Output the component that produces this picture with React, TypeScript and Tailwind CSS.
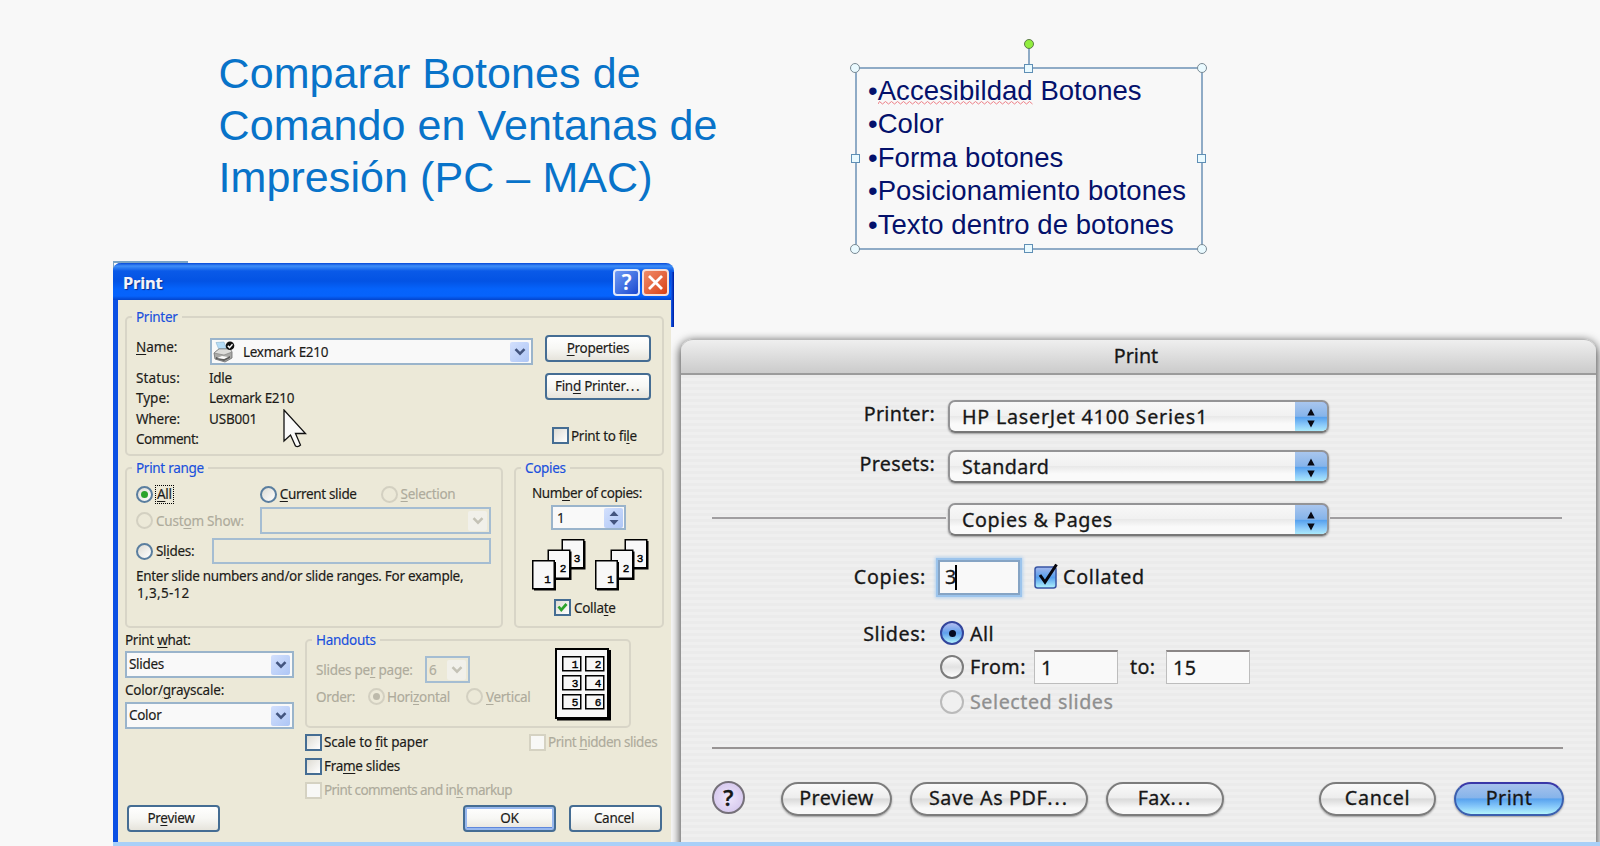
import React from "react";

type Kids = { children?: React.ReactNode };

const U = ({ children }: Kids) => (
  <span className="underline decoration-1 underline-offset-2">{children}</span>
);

/* ---------- slide text box ---------- */

const Handle = ({ at, round }: { at: string; round?: boolean }) => (
  <span
    className={`absolute border bg-[#eafaff] ${
      round ? "size-[10px] rounded-full border-[#7a8a94]" : "size-[9px] border-[#5f8fb5]"
    } ${at}`}
  />
);

const bullets = ["Color", "Forma botones", "Posicionamiento botones", "Texto dentro de botones"];

const TextBox = () => (
  <div className="absolute left-[855px] top-[67px] h-[183px] w-[348px] border-2 border-[#8fabc6] pl-[11px] pt-[5px] text-[27.5px] leading-[33.4px] tracking-[0.05px] text-[#04116b]">
    <div className="flex whitespace-nowrap">
      <span>•</span>
      <span className="relative">
        Accesibildad
        <svg className="absolute left-0 top-[27px]" width="156" height="4" viewBox="0 0 156 4">
          <path
            d={"M0 3" + Array.from({ length: 52 }, (_, i) => ` L${i * 3 + 1.5} ${i % 2 ? 3 : 0.5}`).join("")}
            fill="none"
            stroke="#ee7f86"
            strokeWidth="1"
          />
        </svg>
      </span>
      <span>&nbsp;Botones</span>
    </div>
    {bullets.map((b) => (
      <div key={b} className="whitespace-nowrap">•{b}</div>
    ))}
    <span className="absolute -top-[22px] left-[171px] h-[20px] w-[2px] bg-[#8fabc6]" />
    <span className="absolute -top-[30px] left-[167px] size-[10px] rounded-full border border-[#5d7c4a] bg-[#92ee3f]" />
    <Handle at="-left-[7px] -top-[6px]" round />
    <Handle at="-right-[6px] -top-[6px]" round />
    <Handle at="-left-[7px] -bottom-[6px]" round />
    <Handle at="-right-[6px] -bottom-[6px]" round />
    <Handle at="left-[167px] -top-[5px]" />
    <Handle at="left-[167px] -bottom-[5px]" />
    <Handle at="-left-[6px] top-[85px]" />
    <Handle at="-right-[5px] top-[85px]" />
  </div>
);

/* ---------- Windows XP dialog ---------- */

const Group = ({ title, className, children }: Kids & { title: string; className: string }) => (
  <fieldset className={`rounded-[5px] border-2 border-[#d8d5c7] ${className}`}>
    <legend className="ml-[5px] h-4 px-[4px] leading-4 text-[#1a50dd]">{title}</legend>
    {children}
  </fieldset>
);

const Chevron = ({ off }: { off?: boolean }) => (
  <span
    className={`flex h-5 w-[19px] shrink-0 items-center justify-center rounded-[2px] ${
      off ? "bg-[#f1f0ea]" : "bg-gradient-to-br from-[#d3e0fd] to-[#aec6f5]"
    }`}
  >
    <svg width="12" height="8" viewBox="0 0 12 8">
      <path d="M1.5 1.2 6 5.7l4.500-4.500" fill="none" stroke={off ? "#c4c2b6" : "#43557f"} strokeWidth="2.600" />
    </svg>
  </span>
);

const Combo = ({ className, off, children }: Kids & { className: string; off?: boolean }) => (
  <div
    className={`flex items-center justify-between border-2 pr-[2px] ${
      off ? "border-[#a5bdd2] bg-[#ece9d8] text-[#b0ad9e]" : "border-[#9ab4cb] bg-[#f9f9f9]"
    } ${className}`}
  >
    <span className="flex items-center">{children}</span>
    <Chevron off={off} />
  </div>
);

const XpButton = ({ className, primary, children }: Kids & { className: string; primary?: boolean }) => (
  <button
    className={`flex h-[27px] items-center justify-center rounded-[4px] border-2 border-[#456d93] bg-gradient-to-b from-white via-[#f7f7f4] to-[#e6e4dc] pb-px ${
      primary ? "shadow-[inset_0_0_0_2px_#98b8ee,inset_0_-3px_0_0_#5f87dc]" : ""
    } ${className}`}
  >
    {children}
  </button>
);

const XpCheck = ({ on, off }: { on?: boolean; off?: boolean }) => (
  <span
    className={`flex size-[17px] shrink-0 items-center justify-center border-2 ${
      off ? "border-[#d5d2c2] bg-[#f8f8f6]" : "border-[#456d93] bg-gradient-to-br from-[#dedcd4] to-white"
    }`}
  >
    {on && (
      <svg width="11" height="11" viewBox="0 0 11 11">
        <path d="M1.500 4.500 4.300 8 9.500 2" fill="none" stroke="#2ba32b" strokeWidth="2.700" />
      </svg>
    )}
  </span>
);

const XpRadio = ({ on, off }: { on?: boolean; off?: boolean }) => (
  <span
    className={`flex size-[17px] shrink-0 items-center justify-center rounded-full border-2 ${
      off ? "border-[#d3d0c1] bg-[#ece9d8]" : "border-[#5a7e9f] bg-gradient-to-br from-[#dedcd4] to-white"
    }`}
  >
    {on && <span className={`size-[7px] rounded-full ${off ? "bg-[#bdbaab]" : "bg-[#2ba32b]"}`} />}
  </span>
);

const PrinterIcon = () => (
  <svg width="22" height="22" viewBox="0 0 22 22">
    <path d="M3 1.500l8-.5 3 8-7 2z" fill="#b5dcf6" stroke="#8bb2cd" strokeWidth=".6" />
    <path d="M1 12 6 8l11 0 2 3v6l-7 4-10-3z" fill="#a9a9a7" stroke="#6d6d6d" strokeWidth=".8" />
    <path d="M1 12l10 2 8-3-2-3H6z" fill="#dcdcda" stroke="#7a7a7a" strokeWidth=".6" />
    <path d="M3 16l8 2 6-3v2l-6 3-8-2z" fill="#5c5c5c" />
    <path d="M4 17l7 1 4-2-6-1z" fill="#fafafa" />
    <circle cx="17" cy="4.800" r="4.300" fill="#111" />
    <path d="M14.800 4.800l1.700 1.800 3-3.400" fill="none" stroke="#fff" strokeWidth="1.400" />
  </svg>
);

const Page = ({ x, y, n }: { x: number; y: number; n: number }) => (
  <g transform={`translate(${x} ${y})`}>
    <rect x="2" y="2" width="22" height="28.500" fill="#000" />
    <rect x=".75" y=".75" width="21.500" height="28" fill="#f8f8f8" stroke="#000" strokeWidth="1.500" />
    <text x="15.500" y="22.500" textAnchor="middle" fontFamily="Liberation Mono" stroke="#000" strokeWidth=".4" fontSize="11">
      {n}
    </text>
  </g>
);

const CollatePages = () => (
  <svg className="block" width="118" height="52" viewBox="0 0 118 52">
    {[0, 63].map((x) => (
      <React.Fragment key={x}>
        <Page x={x + 29.5} y={0} n={3} />
        <Page x={x + 15.5} y={10.5} n={2} />
        <Page x={x} y={21} n={1} />
      </React.Fragment>
    ))}
  </svg>
);

const HandoutSheet = () => (
  <svg className="block" width="57" height="73" viewBox="0 0 57 73">
    <rect x="2" y="2" width="54" height="70.500" fill="#000" />
    <rect x="1" y="1" width="52" height="69" fill="#f8f8f8" stroke="#000" strokeWidth="2" />
    {[1, 2, 3, 4, 5, 6].map((n, i) => (
      <g key={n} transform={`translate(${7 + (i % 2) * 23} ${8 + Math.floor(i / 2) * 19})`}>
        <rect x=".75" y=".75" width="18" height="14" fill="#f8f8f8" stroke="#000" strokeWidth="1.500" />
        <text x="13" y="11.500" textAnchor="middle" fontFamily="Liberation Mono" stroke="#000" strokeWidth=".4" fontSize="11">
          {n}
        </text>
      </g>
    ))}
  </svg>
);

const XpDialog = () => (
  <div className="absolute left-[113px] top-[263px] flex h-[579px] w-[561px] flex-col whitespace-nowrap rounded-t-[8px] border-l-[5px] border-[#0b50e4] bg-[#ece9d8] font-['Noto_Sans',sans-serif] text-[13.5px] leading-[16px] tracking-[-0.3px] text-[#1c1b18] [-webkit-text-stroke:0.15px]">
    <div className="-ml-[5px] flex h-[37px] shrink-0 items-center rounded-t-[8px] bg-[linear-gradient(#0648d8_0,#3f8ff8_3px,#0a5ae8_8px,#0353e4_18px,#0563fb_26px,#0663fc_33px,#0344cc_37px)] pl-[10px] pr-[5px]">
      <span className="mt-[3px] grow text-[16.5px] font-bold tracking-[-0.2px] text-[#f4f4fa] [text-shadow:1px_1px_1px_#0a2a8a]">Print</span>
      <span className="mt-[2px] flex size-[27px] items-center justify-center rounded-[4px] border-2 border-[#dfe8fb] bg-gradient-to-br from-[#6f9af5] to-[#1c46cf] text-[21px] font-semibold leading-none text-white">
        ?
      </span>
      <span className="ml-[2px] mt-[2px] flex size-[27px] items-center justify-center rounded-[4px] border-2 border-[#f6dfd8] bg-gradient-to-br from-[#f08a66] to-[#d8400f]">
        <svg width="17" height="17" viewBox="0 0 17 17">
          <path d="M2 2l13 13M15 2 2 15" stroke="#fff" strokeWidth="2.800" />
        </svg>
      </span>
    </div>

    <Group title="Printer" className="ml-[7px] mt-[9px] flex h-[147px] w-[539px] justify-between">
      <div className="flex h-full">
        <div className="ml-[9px] mt-[13px] w-[399px]">
          <div className="flex h-[27px]">
            <span className="w-[74px] pt-px tracking-[-0.1px]"><U>N</U>ame:</span>
            <Combo className="w-[323px]">
              <span className="ml-px"><PrinterIcon /></span>
              <span className="ml-[8px]">Lexmark E210</span>
            </Combo>
          </div>
          <div className="mt-[3px] grid grid-cols-[73px_1fr] leading-[20.3px]">
            <span className="tracking-[0.1px]">Status:</span><span>Idle</span>
            <span className="tracking-[0px]">Type:</span><span>Lexmark E210</span>
            <span className="tracking-[-0.2px]">Where:</span><span className="tracking-[-0.2px]">USB001</span>
            <span className="tracking-[-0.5px]">Comment:</span>
          </div>
        </div>
        <div className="ml-[10px] mt-[10px] flex w-[106px] flex-col">
          <XpButton className="w-full"><span><U>P</U>roperties</span></XpButton>
          <XpButton className="mt-[11px] w-full"><span>Fin<U>d</U> Printer<span className="tracking-[1.5px]">...</span></span></XpButton>
          <div className="mt-[27px] flex items-center gap-[2px] pl-[7px]">
            <XpCheck /><span>Print to fi<U>l</U>e</span>
          </div>
        </div>
      </div>
    </Group>

    <div className="ml-[7px] mt-[4px] flex gap-[11px]">
      <Group title="Print range" className="h-[168px] w-[378px]">
        <div className="ml-[9px] mt-[8px] flex h-[20px] items-center">
          <XpRadio on />
          <span className="ml-[2px] border border-dotted border-black px-px leading-[17px]"><U>A</U>ll</span>
          <span className="ml-[86px] flex items-center gap-[3px]"><XpRadio /><span className="tracking-[-0.35px]"><U>C</U>urrent slide</span></span>
          <span className="ml-[24px] flex items-center gap-[3px] text-[#aeab9c]"><XpRadio off /><span><U>S</U>election</span></span>
        </div>
        <div className="ml-[9px] mt-[3px] flex h-[27px] items-center gap-[3px] text-[#aeab9c]">
          <XpRadio off />
          <span className="w-[101px] tracking-[-0.2px]">Cust<U>o</U>m Show:</span>
          <Combo off className="h-[27px] w-[231px]" />
        </div>
        <div className="ml-[9px] mt-[4px] flex h-[26px] items-center gap-[3px]">
          <XpRadio />
          <span className="w-[53px]">Sl<U>i</U>des:</span>
          <span className="h-[26px] w-[279px] border-2 border-[#a5bdd2]" />
        </div>
        <div className="ml-[9px] mt-[4px] leading-[16.6px] tracking-[-0.3px]">
          Enter slide numbers and/or slide ranges. For example,
          <br />
          <span className="ml-px tracking-[0.3px]">1,3,5-12</span>
        </div>
      </Group>
      <Group title="Copies" className="h-[168px] w-[150px]">
        <div className="ml-[16px] mt-[9px] tracking-[-0.4px]">Num<U>b</U>er of copies:</div>
        <div className="ml-[35px] mt-[4px] flex h-[25px] w-[75px] items-center justify-between border-2 border-[#9ab4cb] bg-[#f9f9f9] pl-[4px] pr-px">
          <span>1</span>
          <span className="flex h-[20px] w-[19px] items-center justify-center rounded-[2px] bg-gradient-to-br from-[#d3e0fd] to-[#aec6f5]">
            <svg width="10" height="16" viewBox="0 0 10 16">
              <path d="M.5 6 5 1l4.500 5zM.5 10 5 15l4.500-5z" fill="#43557f" />
            </svg>
          </span>
        </div>
        <div className="ml-[16px] mt-[9px]"><CollatePages /></div>
        <div className="ml-[38px] mt-[8px] flex items-center gap-[3px]"><XpCheck on /><span>Colla<U>t</U>e</span></div>
      </Group>
    </div>

    <div className="ml-[7px] mt-[4px] flex h-[172px]">
      <div className="w-[180px]">
        <div>Print <U>w</U>hat:</div>
        <Combo className="mt-[3px] h-[27px] w-[169px]"><span className="-mt-px pl-[2px]">Slides</span></Combo>
        <div className="mt-[4px] tracking-[-0.2px]">Color/<U>g</U>rayscale:</div>
        <Combo className="mt-[4px] h-[27px] w-[169px]"><span className="-mt-px pl-[2px]">Color</span></Combo>
      </div>
      <div>
        <Group title="Handouts" className="flex h-[96px] w-[326px] text-[#aeab9c]">
          <div className="flex">
            <div className="ml-[9px] mt-[8px] w-[239px]">
              <div className="flex h-[27px] items-center">
                <span className="w-[109px] tracking-[-0.25px]">Slides pe<U>r</U> page:</span>
                <Combo off className="h-[27px] w-[45px]"><span className="pl-[2px]">6</span></Combo>
              </div>
              <div className="flex h-[27px] items-center">
                <span className="w-[52px]">Order:</span>
                <XpRadio on off />
                <span className="ml-[2px] w-[79px]">Hori<U>z</U>ontal</span>
                <XpRadio off />
                <span className="ml-[3px]"><U>V</U>ertical</span>
              </div>
            </div>
            <HandoutSheet />
          </div>
        </Group>
        <div className="mt-[5px] flex h-[18px] items-center gap-[2px]">
          <XpCheck />
          <span className="w-[203px] tracking-[-0.15px]">Scale to <U>f</U>it paper</span>
          <span className="flex items-center gap-[2px] text-[#aeab9c]"><XpCheck off /><span className="tracking-[-0.45px]">Print <U>h</U>idden slides</span></span>
        </div>
        <div className="mt-[6px] flex h-[18px] items-center gap-[2px]"><XpCheck /><span>Fra<U>m</U>e slides</span></div>
        <div className="mt-[6px] flex h-[18px] items-center gap-[2px] text-[#aeab9c]">
          <XpCheck off /><span className="tracking-[-0.57px]">Print comments and in<U>k</U> markup</span>
        </div>
      </div>
    </div>
    <div className="ml-[9px] mt-px flex">
      <XpButton className="w-[93px]"><span className="-ml-[5px]">Pr<U>e</U>view</span></XpButton>
      <XpButton primary className="ml-[243px] w-[93px]">OK</XpButton>
      <XpButton className="ml-[13px] w-[93px]"><span className="-ml-[3px]">Cancel</span></XpButton>
    </div>
  </div>
);

/* ---------- Mac OS X dialog ---------- */

const Popup = ({ className = "", children }: Kids & { className?: string }) => (
  <div
    className={`flex h-[33px] w-[381px] shrink-0 overflow-hidden rounded-[7px] border-2 border-[#949496] border-b-[#777777] bg-[linear-gradient(#f8f8f8_0,#f1f1f1_47%,#e9e9e9_50%,#fafafa_75%)] shadow-[0_1px_2px_rgba(0,0,0,0.35)] ${className}`}
  >
    <span className="grow pl-[12px] leading-[29px]">{children}</span>
    <span className="-mr-[2px] -mt-[2px] flex h-[33px] w-[34px] items-center justify-center rounded-r-[7px] border-r-2 border-t-2 border-r-[#2b5fb5] border-t-[#2d2f9c] bg-[linear-gradient(#a9c6ee_0,#86b4ea_46%,#58a2ee_50%,#8dcbfa_75%,#b4f4fb)]">
      <svg width="8" height="20" viewBox="0 0 8 20">
        <path d="M.3 7.500 4 .5l3.700 7zM.3 12.500 4 19.500l3.700-7z" fill="#0a0a14" />
      </svg>
    </span>
  </div>
);

const MacRadio = ({ on, off }: { on?: boolean; off?: boolean }) => (
  <span
    className={`mr-[6px] flex size-[24px] shrink-0 items-center justify-center rounded-full border-2 ${
      on
        ? "border-[#33459c] bg-[linear-gradient(#b3bdf0_0,#5f9fec_50%,#b0f2fc)]"
        : off
          ? "border-[#bababa] bg-[#f0f0f0]"
          : "border-[#7c7c7c] bg-[linear-gradient(#fdfdfd,#e2e2e2_50%,#fdfdfd)]"
    }`}
  >
    {on && <span className="size-[7px] rounded-full bg-[#050a20]" />}
  </span>
);

const MacButton = ({ className, primary, children }: Kids & { className: string; primary?: boolean }) => (
  <button
    className={`h-[34px] rounded-full border-2 pb-[2px] leading-[28px] shadow-[0_1px_2px_rgba(0,0,0,0.35)] ${
      primary
        ? "border-[#3b5fae] border-t-[#3a38a8] bg-[linear-gradient(#a6c2ec_0,#86b4ea_46%,#58a2ee_50%,#86c8fa_75%,#b4f4fb)]"
        : "border-[#7c7c7c] bg-[linear-gradient(#fafafa_0,#ededed_46%,#dadada_50%,#f8f8f8_80%)]"
    } ${className}`}
  >
    {children}
  </button>
);

const MacField = ({ children }: Kids) => (
  <span className="h-[34px] w-[84px] border border-t-2 border-[#bdbdbd] border-t-[#8b8787] bg-[#f9f9f9] pl-[6px] leading-[32px]">
    {children}
  </span>
);

const MacDialog = () => (
  <div className="absolute left-[671px] top-[327px] h-[515px] w-[929px] overflow-hidden bg-[#f8f8f8] pl-[10px] pt-[12px]">
    <div className="flex h-[510px] w-[915px] flex-col whitespace-nowrap rounded-t-[12px] bg-[repeating-linear-gradient(#ebebeb_0,#ebebeb_3px,#efefef_3px,#efefef_6px)] font-['Noto_Sans',sans-serif] text-[19.7px] tracking-[0.4px] text-[#171717] shadow-[0_3px_10px_1px_rgba(0,0,0,0.75)] [-webkit-text-stroke:0.3px]">
      <div className="flex h-[36px] shrink-0 items-center justify-center rounded-t-[12px] border-b-2 border-t border-b-[#9b9b9b] border-t-[#b8b8b8] bg-gradient-to-b from-[#efefef] to-[#cbcbcb] pb-px pr-[5px] tracking-[0px]">
        Print
      </div>
      <div className="mt-[25px] flex gap-[13px]">
        <span className="w-[254px] text-right leading-[28px] tracking-[0.3px]">Printer:</span>
        <Popup className="tracking-[0.77px]">HP LaserJet 4100 Series1</Popup>
      </div>
      <div className="mt-[17px] flex gap-[13px]">
        <span className="w-[254px] text-right leading-[28px] tracking-[0.3px]">Presets:</span>
        <Popup className="tracking-[0.4px]">Standard</Popup>
      </div>
      <div className="mt-[20px] flex pl-[31px]">
        <span className="mt-[14px] h-[2px] w-[234px] bg-[#a09ea0]" />
        <span className="ml-[2px]"><Popup className="tracking-[0.6px]">Copies &amp; Pages</Popup></span>
        <span className="ml-px mt-[14px] h-[2px] w-[232px] bg-[#a09ea0]" />
      </div>
      <div className="mt-[21px] flex h-[40px] items-center">
        <span className="w-[245px] text-right tracking-[0.7px]">Copies:</span>
        <span className="ml-[12px] flex h-[35px] w-[82px] items-center border-2 border-[#86a4c4] bg-[#f9f9f9] pl-[5px] shadow-[0_0_0_2px_#9cc4ec,0_0_3px_3px_#b6d2ee]">
          <span className="tracking-[-1px]">3</span><span className="h-[25px] w-[2px] bg-black" />
        </span>
        <svg className="-mt-[2px] ml-[14px]" width="25" height="27" viewBox="0 0 25 27">
          <defs>
            <linearGradient id="aqua" x1="0" y1="0" x2="0" y2="1">
              <stop offset="0" stopColor="#a5b8ec" />
              <stop offset=".5" stopColor="#569fee" />
              <stop offset="1" stopColor="#b2f5fc" />
            </linearGradient>
          </defs>
          <rect x="1" y="4" width="21" height="21" rx="2.500" fill="url(#aqua)" stroke="#3956a4" strokeWidth="1.500" />
          <path d="M6 12l5 7L22.500 1.500" fill="none" stroke="#06060e" strokeWidth="3" />
        </svg>
        <span className="ml-[4px] tracking-[0.75px]">Collated</span>
      </div>
      <div className="mt-[19px] flex h-[35px] items-center">
        <span className="w-[245px] text-right tracking-[0.55px]">Slides:</span>
        <span className="ml-[14px] flex items-center"><MacRadio on />All</span>
      </div>
      <div className="-mt-px flex h-[34px] items-center pl-[259px]">
        <MacRadio />
        <span className="w-[64px] tracking-[0.5px]">From:</span>
        <MacField>1</MacField>
        <span className="ml-[12px] w-[36px]">to:</span>
        <MacField>15</MacField>
      </div>
      <div className="flex h-[35px] items-center pl-[259px] text-[#8f8f8f]">
        <MacRadio off />
        <span className="tracking-[0.55px]">Selected slides</span>
      </div>
      <div className="ml-[31px] mt-[28px] h-[2px] w-[851px] bg-[#979393]" />
      <div className="mt-[33px] flex pl-[31px]">
        <span className="-mt-px flex size-[33px] items-center justify-center rounded-full border-2 border-[#757079] bg-[radial-gradient(circle,#efe6fb,#cfc0ea)] text-[22px] font-semibold">
          ?
        </span>
        <MacButton className="ml-[36px] w-[111px]">Preview</MacButton>
        <MacButton className="ml-[18px] w-[178px]"><span className="tracking-[0.6px]">Save As PDF<span className="tracking-[2px]">...</span></span></MacButton>
        <MacButton className="ml-[18px] w-[118px]"><span>Fax<span className="tracking-[2px]">...</span></span></MacButton>
        <MacButton className="ml-[95px] w-[117px] tracking-[0.7px]">Cancel</MacButton>
        <MacButton primary className="ml-[18px] w-[110px]">Print</MacButton>
      </div>
    </div>
  </div>
);

const Cursor = () => (
  <svg className="absolute left-[283px] top-[409px]" width="25" height="40" viewBox="0 0 25 40">
    <path
      d="M1 1v31l6.500-6 5 11q2.500 1.500 5-1L12.500 24.500H22.500z"
      fill="#fafafa"
      stroke="#111"
      strokeWidth="1.300"
    />
  </svg>
);

export default function App() {
  return (
    <div className="relative flex h-[846px] w-[1600px] flex-col overflow-hidden bg-[#f8f8f8] font-['Liberation_Sans',Arial,sans-serif]">
      <h1 className="ml-[218.5px] mt-[47px] w-[560px] whitespace-nowrap text-[43px] leading-[52px] tracking-[0.08px] text-[#0873c9]">
        Comparar Botones de
        <br />
        Comando en Ventanas de
        <br />
        Impresión (PC – MAC)
      </h1>
      <TextBox />
      <span className="absolute left-[113px] top-[261px] h-[12px] w-[75px] border-l border-t-2 border-[#7aa3c4]" />
      <XpDialog />
      <span className="absolute left-[671px] top-[272px] h-[55px] w-[3px] bg-gradient-to-r from-[#1a5cec] to-[#0019a0]" />
      <MacDialog />
      <Cursor />
      <div className="ml-[113px] mt-auto h-[4px] bg-[#a9d0f8]" />
    </div>
  );
}
